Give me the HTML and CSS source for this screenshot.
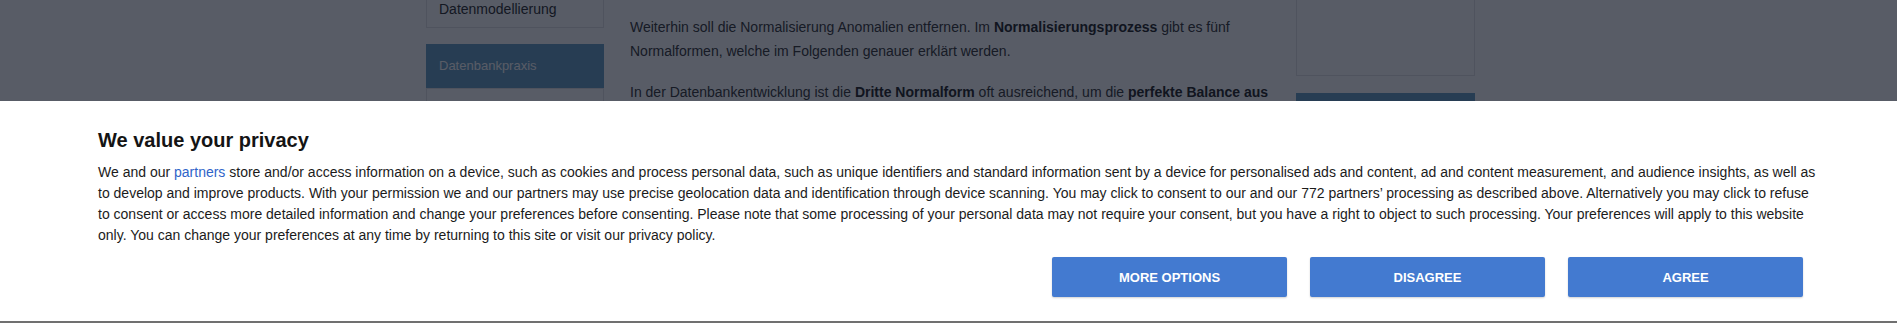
FILE: index.html
```html
<!DOCTYPE html>
<html lang="de">
<head>
<meta charset="utf-8">
<title>Normalisierung</title>
<link rel="stylesheet" href="styles.css">
</head>
<body>
<div class="page">
  <aside class="nav">
    <div class="nav-item">Datenmodellierung</div>
    <div class="nav-item active">Datenbankpraxis</div>
    <div class="nav-item">Datenbankdesign</div>
  </aside>
  <main class="content">
    <p>Weiterhin soll die Normalisierung Anomalien entfernen. Im <strong>Normalisierungsprozess</strong> gibt es fünf Normalformen, welche im Folgenden genauer erklärt werden.</p>
    <p>In der Datenbankentwicklung ist die <strong>Dritte Normalform</strong> oft ausreichend, um die <strong>perfekte Balance aus</strong> Redundanz, Performance und Flexibilität zu gewährleisten.</p>
  </main>
  <aside class="sidebar">
    <div class="side-box"></div>
    <div class="side-box dark"></div>
  </aside>
</div>
<div class="overlay"></div>
<div class="consent">
  <h2 class="consent-title">We value your privacy</h2>
  <p class="consent-text">We and our <a href="#" class="consent-link">partners</a> store and/or access information on a device, such as cookies and process personal data, such as unique identifiers and standard information sent by a device for personalised ads and content, ad and content measurement, and audience insights, as well as<br>to develop and improve products. With your permission we and our partners may use precise geolocation data and identification through device scanning. You may click to consent to our and our 772 partners’ processing as described above. Alternatively you may click to refuse<br>to consent or access more detailed information and change your preferences before consenting. Please note that some processing of your personal data may not require your consent, but you have a right to object to such processing. Your preferences will apply to this website<br>only. You can change your preferences at any time by returning to this site or visit our privacy policy.</p>
  <div class="consent-actions">
    <button class="btn">MORE OPTIONS</button>
    <button class="btn">DISAGREE</button>
    <button class="btn">AGREE</button>
  </div>
</div>
</body>
</html>
```

FILE: styles.css
```css
html, body {
  margin: 0;
  padding: 0;
  height: 100%;
  overflow: hidden;
  background: #ffffff;
  font-family: "Liberation Sans", Arial, Helvetica, sans-serif;
}

.page {
  width: 1049px;
  margin: -10px 0 0 426px;
  display: flex;
  gap: 26px;
  align-items: flex-start;
}

.nav {
  width: 178px;
  flex: none;
  display: flex;
  flex-direction: column;
}

.nav-item {
  border: 1px solid #e6e6e8;
  padding: 8px 12px;
  font-size: 14px;
  line-height: 20px;
  color: #3a3a3a;
  background: #ffffff;
}

.nav-item.active {
  margin-top: 16px;
  background: #71a5c8;
  border-color: #71a5c8;
  color: #ffffff;
  font-size: 13px;
  padding: 11px 12px;
}

.content {
  width: 640px;
  flex: none;
  padding-top: 25px;
  font-size: 14px;
  line-height: 24px;
  color: #444444;
}

.content p {
  margin: 0 0 17px;
}

.content strong {
  color: #333333;
}

.sidebar {
  width: 179px;
  flex: none;
  display: flex;
  flex-direction: column;
  gap: 17px;
}

.side-box {
  height: 84px;
  border: 1px solid #e6e6e8;
}

.side-box.dark {
  height: 60px;
  background: #71a5c8;
  border-color: #71a5c8;
}

.overlay {
  position: fixed;
  inset: 0;
  background: rgba(0, 6, 21, 0.655);
  z-index: 10;
}

.consent {
  position: fixed;
  left: 0;
  right: 0;
  top: 101px;
  bottom: 0;
  z-index: 20;
  background: #ffffff;
  border-bottom: 2px solid #707070;
  padding: 27px 94px 0 98px;
  box-sizing: border-box;
  color: #1b1b1b;
}

.consent-title {
  margin: 0 0 10px;
  font-size: 20px;
  line-height: 24px;
  font-weight: bold;
  color: #141414;
}

.consent-text {
  margin: 0 -60px 0 0;
  font-size: 14px;
  line-height: 21px;
  color: #1b1b1b;
}

.consent-link {
  color: #2f64c9;
  text-decoration: none;
}

.consent-actions {
  display: flex;
  justify-content: flex-end;
  gap: 23px;
  margin-top: 11px;
}

.btn {
  width: 235px;
  height: 40px;
  border: none;
  border-radius: 2px;
  background: #437ad0;
  color: #ffffff;
  font-family: "Liberation Sans", Arial, Helvetica, sans-serif;
  font-size: 13px;
  font-weight: bold;
  box-shadow: 0 1px 2px rgba(0, 0, 0, 0.18);
  cursor: pointer;
}
```
